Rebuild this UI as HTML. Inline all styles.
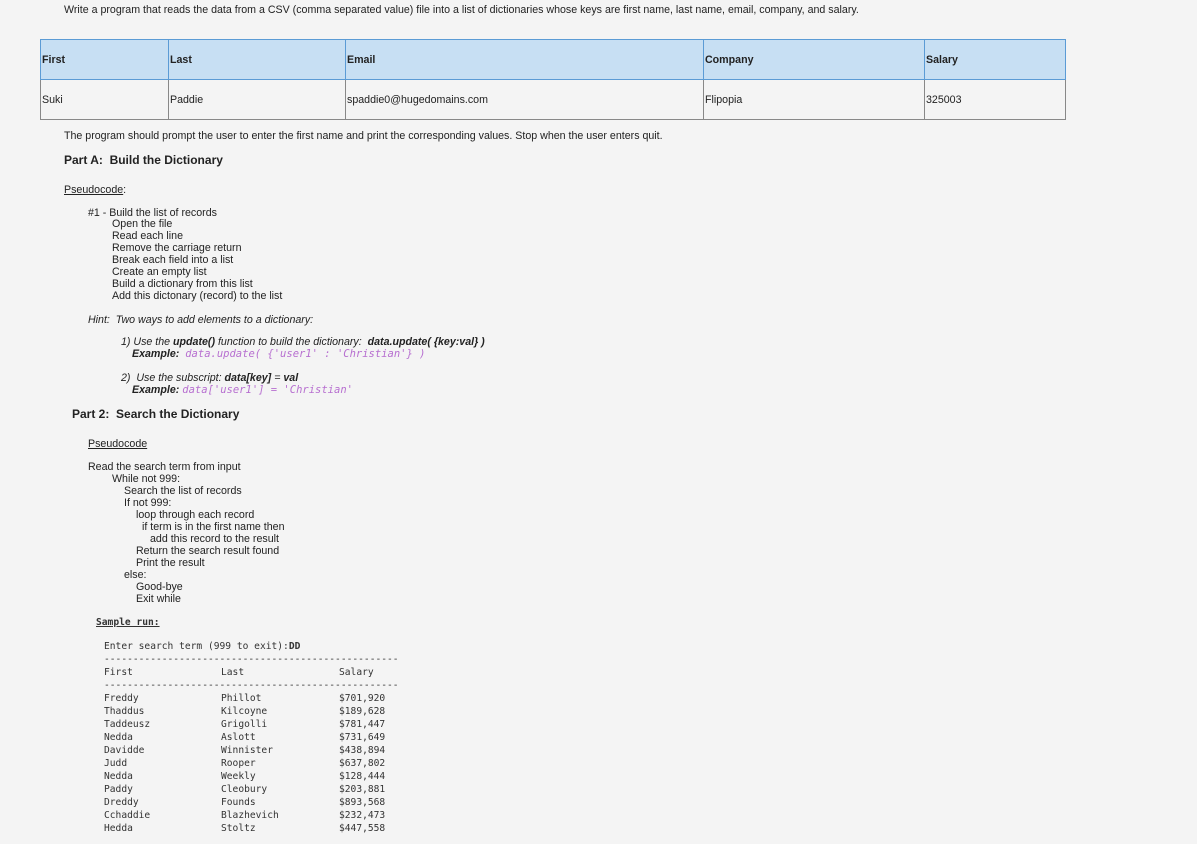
<!DOCTYPE html>
<html><head><meta charset="utf-8"><style>
html,body{margin:0;padding:0;background:#f4f4f4;width:1197px;height:844px;overflow:hidden;position:relative;font-family:"Liberation Sans",Arial,sans-serif;color:#222;}
.t{position:absolute;white-space:pre;font-size:10.65px;line-height:14px;}
.m{position:absolute;white-space:pre;font-family:"DejaVu Sans Mono","Liberation Mono",monospace;font-size:9.6px;line-height:13px;color:#333;}
.h{position:absolute;white-space:pre;font-size:12px;line-height:16px;font-weight:bold;color:#222;}
i{font-style:italic}
.p{color:#b76fd0;font-family:"DejaVu Sans Mono","Liberation Mono",monospace;font-style:italic;font-size:10.5px;}
table{position:absolute;left:40px;top:39px;border-collapse:collapse;font-size:10.65px;table-layout:fixed;width:1025px;}
td{height:40px;padding:1px 0 0 1px;box-sizing:border-box;vertical-align:middle;overflow:hidden;white-space:nowrap;line-height:12px;}
tr.hd td{background:#c7dff3;border:1px solid #5b9bd5;font-weight:bold;color:#222;}
tr.bd td{border:1px solid #888;}
</style></head><body>
<div class="t" style="left:64px;top:3px">Write a program that reads the data from a CSV (comma separated value) file into a list of dictionaries whose keys are first name, last name, email, company, and salary.</div>
<table>
<colgroup><col style="width:128px"><col style="width:177px"><col style="width:358px"><col style="width:221px"><col style="width:141px"></colgroup>
<tr class="hd"><td>First</td><td>Last</td><td>Email</td><td>Company</td><td>Salary</td></tr>
<tr class="bd"><td>Suki</td><td>Paddie</td><td>spaddie0@hugedomains.com</td><td>Flipopia</td><td>325003</td></tr>
</table>
<div class="t" style="left:64px;top:129px">The program should prompt the user to enter the first name and print the corresponding values. Stop when the user enters quit.</div>
<div class="h" style="left:64px;top:152px">Part A:  Build the Dictionary</div>
<div class="t" style="left:64px;top:183px"><u>Pseudocode</u>:</div>
<div class="t" style="left:88px;top:206px">#1 - Build the list of records</div>
<div class="t" style="left:112px;top:218px;line-height:12px">Open the file
Read each line
Remove the carriage return
Break each field into a list
Create an empty list
Build a dictionary from this list
Add this dictonary (record) to the list</div>
<div class="t" style="left:88px;top:313px"><i>Hint:  Two ways to add elements to a dictionary:</i></div>
<div class="t" style="left:121px;top:335px"><i>1) Use the <b>update()</b> function to build the dictionary:  <b>data.update( {key:val} )</b></i></div>
<div class="t" style="left:132px;top:347px"><i><b>Example:</b>  <span class="p">data.update( {'user1' : 'Christian'} )</span></i></div>
<div class="t" style="left:121px;top:371px"><i>2)  Use the subscript: <b>data[key]</b> = <b>val</b></i></div>
<div class="t" style="left:132px;top:383px"><i><b>Example:</b> <span class="p">data['user1'] = 'Christian'</span></i></div>
<div class="h" style="left:72px;top:406px">Part 2:  Search the Dictionary</div>
<div class="t" style="left:88px;top:437px"><u>Pseudocode</u></div>
<div class="t" style="left:88px;top:460px">Read the search term from input</div>
<div class="t" style="left:112px;top:472px">While not 999:</div>
<div class="t" style="left:124px;top:484px">Search the list of records</div>
<div class="t" style="left:124px;top:496px">If not 999:</div>
<div class="t" style="left:136px;top:508px">loop through each record</div>
<div class="t" style="left:142px;top:520px">if term is in the first name then</div>
<div class="t" style="left:150px;top:532px">add this record to the result</div>
<div class="t" style="left:136px;top:544px">Return the search result found</div>
<div class="t" style="left:136px;top:556px">Print the result</div>
<div class="t" style="left:124px;top:568px">else:</div>
<div class="t" style="left:136px;top:580px">Good-bye</div>
<div class="t" style="left:136px;top:592px">Exit while</div>
<div class="m" style="left:96px;top:616px;font-weight:bold;text-decoration:underline">Sample run:</div>
<div class="m" style="left:104px;top:640px">Enter search term (999 to exit):<b>DD</b></div>
<div class="m" style="left:104px;top:653px">---------------------------------------------------</div>
<div class="m" style="left:104px;top:666px">First</div><div class="m" style="left:221px;top:666px">Last</div><div class="m" style="left:339px;top:666px">Salary</div>
<div class="m" style="left:104px;top:679px">---------------------------------------------------</div>
<div class="m" style="left:104px;top:692px">Freddy
Thaddus
Taddeusz
Nedda
Davidde
Judd
Nedda
Paddy
Dreddy
Cchaddie
Hedda</div>
<div class="m" style="left:221px;top:692px">Phillot
Kilcoyne
Grigolli
Aslott
Winnister
Rooper
Weekly
Cleobury
Founds
Blazhevich
Stoltz</div>
<div class="m" style="left:339px;top:692px">$701,920
$189,628
$781,447
$731,649
$438,894
$637,802
$128,444
$203,881
$893,568
$232,473
$447,558</div>
</body></html>
